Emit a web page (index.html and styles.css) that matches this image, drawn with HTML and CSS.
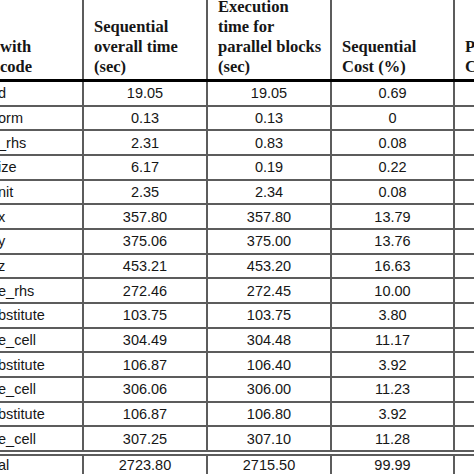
FILE: index.html
```html
<!DOCTYPE html>
<html>
<head>
<meta charset="utf-8">
<link rel="stylesheet" href="styles.css">
</head>
<body>
<div class="frame">
<table class="data">
  <colgroup>
    <col class="c1"><col class="c2"><col class="c3"><col class="c4"><col class="c5">
  </colgroup>
  <thead>
    <tr>
      <th class="name">with<br>code</th>
      <th>Sequential<br>overall time<br>(sec)</th>
      <th>Execution<br>time for<br>parallel blocks<br>(sec)</th>
      <th>Sequential<br>Cost (%)</th>
      <th>Parallel<br>Cost (%)</th>
    </tr>
  </thead>
  <tbody>
    <tr><td class="name">d</td><td>19.05</td><td>19.05</td><td>0.69</td><td></td></tr>
    <tr><td class="name">orm</td><td>0.13</td><td>0.13</td><td>0</td><td></td></tr>
    <tr><td class="name">_rhs</td><td>2.31</td><td>0.83</td><td>0.08</td><td></td></tr>
    <tr><td class="name">ize</td><td>6.17</td><td>0.19</td><td>0.22</td><td></td></tr>
    <tr><td class="name">nit</td><td>2.35</td><td>2.34</td><td>0.08</td><td></td></tr>
    <tr><td class="name">x</td><td>357.80</td><td>357.80</td><td>13.79</td><td></td></tr>
    <tr><td class="name">y</td><td>375.06</td><td>375.00</td><td>13.76</td><td></td></tr>
    <tr><td class="name">z</td><td>453.21</td><td>453.20</td><td>16.63</td><td></td></tr>
    <tr><td class="name">e_rhs</td><td>272.46</td><td>272.45</td><td>10.00</td><td></td></tr>
    <tr><td class="name">bstitute</td><td>103.75</td><td>103.75</td><td>3.80</td><td></td></tr>
    <tr><td class="name">e_cell</td><td>304.49</td><td>304.48</td><td>11.17</td><td></td></tr>
    <tr><td class="name">bstitute</td><td>106.87</td><td>106.40</td><td>3.92</td><td></td></tr>
    <tr><td class="name">e_cell</td><td>306.06</td><td>306.00</td><td>11.23</td><td></td></tr>
    <tr><td class="name">bstitute</td><td>106.87</td><td>106.80</td><td>3.92</td><td></td></tr>
    <tr class="last"><td class="name">e_cell</td><td>307.25</td><td>307.10</td><td>11.28</td><td></td></tr>
    <tr class="total"><td class="name">al</td><td>2723.80</td><td>2715.50</td><td>99.99</td><td></td></tr>
  </tbody>
</table>
</div>
</body>
</html>
```
FILE: styles.css
```css
html, body {
  margin: 0;
  padding: 0;
  background: #ffffff;
}
.frame {
  width: 474px;
  height: 474px;
  overflow: hidden;
}
.data {
  border-collapse: collapse;
  table-layout: fixed;
  width: 560px;
  margin-top: -3px;
  color: #161616;
}
.c1 { width: 83px; }
.c2 { width: 124px; }
.c3 { width: 124px; }
.c4 { width: 123px; }
.c5 { width: 106px; }

.data th {
  font-family: "Liberation Serif", "Times New Roman", serif;
  font-weight: bold;
  font-size: 16.5px;
  line-height: 20px;
  text-align: left;
  vertical-align: bottom;
  padding: 0 0 2px 10px;
  border-left: 2px solid #5c5c5c;
  border-bottom: 3px solid #000;
  white-space: nowrap;
}
.data td {
  font-family: "Liberation Sans", Arial, sans-serif;
  font-size: 14.5px;
  height: 22.67px;
  padding: 0;
  text-align: center;
  vertical-align: middle;
  border-left: 2px solid #5c5c5c;
  border-bottom: 2px solid #5c5c5c;
  white-space: nowrap;
}
.data th.name {
  border-left: none;
  padding-left: 0;
}
.data td.name {
  border-left: none;
  text-align: left;
  padding-left: 0;
  text-indent: -2px;
}
.data tr.last td {
  border-bottom: none;
}
.data tr.total td {
  border-top: 6px double #5c5c5c;
  border-bottom: none;
  vertical-align: top;
  padding-top: 1px;
}
```
